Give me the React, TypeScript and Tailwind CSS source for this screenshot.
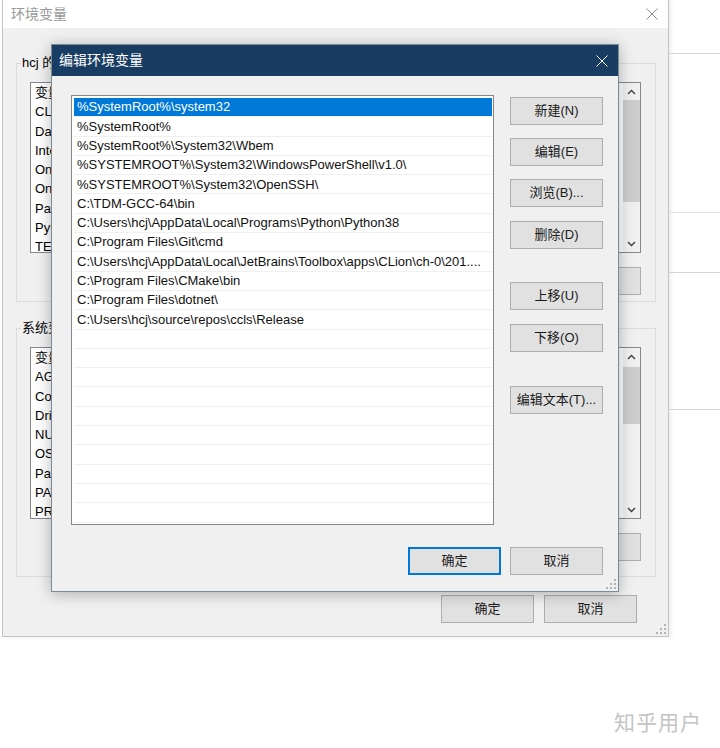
import React from "react";

const FONT = "font-['Liberation_Sans','Noto_Sans_CJK_SC',sans-serif]";

const PATHS = [
  "%SystemRoot%\\system32",
  "%SystemRoot%",
  "%SystemRoot%\\System32\\Wbem",
  "%SYSTEMROOT%\\System32\\WindowsPowerShell\\v1.0\\",
  "%SYSTEMROOT%\\System32\\OpenSSH\\",
  "C:\\TDM-GCC-64\\bin",
  "C:\\Users\\hcj\\AppData\\Local\\Programs\\Python\\Python38",
  "C:\\Program Files\\Git\\cmd",
  "C:\\Users\\hcj\\AppData\\Local\\JetBrains\\Toolbox\\apps\\CLion\\ch-0\\201....",
  "C:\\Program Files\\CMake\\bin",
  "C:\\Program Files\\dotnet\\",
  "C:\\Users\\hcj\\source\\repos\\ccls\\Release",
];

const USER_VARS = ["CLion", "DataGrip", "IntelliJ IDEA", "OneDrive", "OneDriveConsumer", "Path", "PyCharm", "TEMP"];
const SYS_VARS = ["AGENT_HOME", "ComSpec", "DriverData", "NUMBER_OF_PROCESSORS", "OS", "Path", "PATHEXT", "PROCESSOR_ARCHITECTURE"];

const CloseIcon = ({ color }: { color: string }) => (
  <svg width="12" height="12" viewBox="0 0 12 12">
    <path d="M0.5 0.5L11.5 11.5M11.5 0.5L0.5 11.5" stroke={color} strokeWidth="1" fill="none" />
  </svg>
);

const Chevron = ({ down }: { down?: boolean }) => (
  <svg width="9" height="6" viewBox="0 0 9 6">
    <path d={down ? "M1 1L4.5 4.5L8 1" : "M1 5L4.5 1.5L8 5"} stroke="#404040" strokeWidth="1.4" fill="none" />
  </svg>
);

const Grip = () => (
  <svg width="10" height="10" viewBox="0 0 10 10" fill="#b4b4b4">
    <rect x="8" y="0" width="2" height="2" />
    <rect x="4" y="4" width="2" height="2" />
    <rect x="8" y="4" width="2" height="2" />
    <rect x="0" y="8" width="2" height="2" />
    <rect x="4" y="8" width="2" height="2" />
    <rect x="8" y="8" width="2" height="2" />
  </svg>
);

const Button = ({ label, focused, className = "" }: { label: string; focused?: boolean; className?: string }) => (
  <div
    className={`flex h-[28px] w-[93px] shrink-0 items-center justify-center bg-[#e1e1e1] text-[13px] text-[#1a1a1a] ${
      focused ? "border border-[#0078d7] shadow-[inset_0_0_0_1px_#0078d7]" : "border border-[#adadad]"
    } ${className}`}
  >
    {label}
  </div>
);

// list view of the parent window, with its vertical scrollbar
const VarList = ({ items, height, thumb }: { items: string[]; height: string; thumb: string }) => (
  <div className={`flex ${height} w-[611px] border border-[#828790] bg-white`}>
    <div className="flex-1 overflow-hidden pl-[4px]">
      <div className="flex h-[19.3px] items-center text-[13px]">变量</div>
      {items.map((v, i) => (
        <div key={i} className="flex h-[19.3px] items-center whitespace-nowrap text-[13px]">
          {v}
        </div>
      ))}
    </div>
    <div className="flex w-[17px] flex-col bg-[#f0f0f0]">
      <div className="flex h-[17px] items-center justify-center">
        <Chevron />
      </div>
      <div className="flex-1">
        <div className={`bg-[#cdcdcd] ${thumb}`} />
      </div>
      <div className="flex h-[17px] items-center justify-center">
        <Chevron down />
      </div>
    </div>
  </div>
);

const EnvWindow = () => (
  <div className="ml-[2px] flex h-[637px] w-[667px] shrink-0 flex-col border-b border-l border-r border-[#c4c4c4] bg-[#f0f0f0] shadow-[2px_0_4px_rgba(0,0,0,0.08)]">
    <div className="flex h-[28px] items-center justify-between bg-white pl-[8px] pr-[10px]">
      <span className="text-[14px] text-[#9a9a9a]">环境变量</span>
      <CloseIcon color="#8a8a8a" />
    </div>

    <fieldset className="ml-[13px] mt-[26px] w-[640px] border border-[#dcdcdc]">
      <legend className="ml-[4px] px-[1px] text-[13px] leading-[18px]">hcj 的用户变量(U)</legend>
      <div className="pl-[13px] pr-[14px] pb-[6px]">
        <div className="mt-[10px]">
          <VarList items={USER_VARS} height="h-[171px]" thumb="h-[102px]" />
        </div>
        <div className="mt-[14px] flex justify-end gap-[8px]">
          <Button label="新建(W)..." />
          <Button label="编辑(I)..." />
          <Button label="删除(D)" />
        </div>
      </div>
    </fieldset>

    <fieldset className="ml-[13px] mt-[17px] w-[640px] border border-[#dcdcdc]">
      <legend className="ml-[4px] px-[1px] text-[13px] leading-[18px]">系统变量(S)</legend>
      <div className="pl-[13px] pr-[14px] pb-[15px]">
        <div className="mt-[10px]">
          <VarList items={SYS_VARS} height="h-[172px]" thumb="mt-[2px] h-[57px]" />
        </div>
        <div className="mt-[14px] flex justify-end gap-[8px]">
          <Button label="新建(W)..." />
          <Button label="编辑(I)..." />
          <Button label="删除(L)" />
        </div>
      </div>
    </fieldset>

    <div className="mt-[18px] flex justify-end gap-[10px] pr-[31px]">
      <Button label="确定" />
      <Button label="取消" />
    </div>
    <div className="mt-auto flex justify-end pb-[2px] pr-[2px]">
      <Grip />
    </div>
  </div>
);

const EditDialog = () => {
  const rows = [...PATHS, ...Array(10).fill("")];
  return (
    <div className="absolute left-[51px] top-[44px] flex h-[548px] w-[568px] flex-col border border-[#7b8a99] bg-[#f0f0f0] shadow-[0_2px_14px_rgba(0,0,0,0.28)]">
      <div className="flex h-[31px] shrink-0 items-center justify-between bg-[#183c62] pl-[7px] pr-[10px]">
        <span className="text-[14px] text-white">编辑环境变量</span>
        <CloseIcon color="#ffffff" />
      </div>

      <div className="flex flex-col pl-[19px] pr-[15px] pt-[19px]">
        <div className="flex gap-[16px]">
          <div className="h-[430px] w-[423px] overflow-hidden border border-[#828790] bg-white pl-[2px] pr-[1px] pt-[2px]">
            {rows.map((p, i) => (
              <div
                key={i}
                className={`flex h-[19.3px] items-center overflow-hidden whitespace-nowrap border-b border-[#f0f0f0] pl-[3px] text-[13px] ${
                  i === 0 ? "bg-[#0078d7] text-white" : "text-[#111]"
                }`}
              >
                {p}
              </div>
            ))}
          </div>
          <div className="flex flex-col pt-[2px]">
            <Button label="新建(N)" />
            <Button label="编辑(E)" className="mt-[13px]" />
            <Button label="浏览(B)..." className="mt-[13px]" />
            <Button label="删除(D)" className="mt-[14px]" />
            <Button label="上移(U)" className="mt-[33px]" />
            <Button label="下移(O)" className="mt-[14px]" />
            <Button label="编辑文本(T)..." className="mt-[34px]" />
          </div>
        </div>
        <div className="mt-[22px] flex justify-end gap-[9px]">
          <Button label="确定" focused />
          <Button label="取消" />
        </div>
      </div>
      <div className="mt-auto flex justify-end pb-[2px] pr-[2px]">
        <Grip />
      </div>
    </div>
  );
};

export default function App() {
  return (
    <div className={`relative flex h-[748px] w-[720px] overflow-hidden bg-white text-black ${FONT}`}>
      <EnvWindow />
      {/* edge of another window further back */}
      <div className="flex flex-1 flex-col">
        <div className="mt-[53px] h-px bg-[#d6d6d6]" />
        <div className="mt-[158px] h-px bg-[#e2e2e2]" />
        <div className="mt-[59px] h-px bg-[#d6d6d6]" />
        <div className="mt-[136px] h-px bg-[#d6d6d6]" />
      </div>
      <EditDialog />
      <span className="absolute right-[18px] top-[706px] font-['Noto_Sans_CJK_SC',sans-serif] text-[21px] tracking-[1px] text-[#c4c4c4]">
        知乎用户
      </span>
    </div>
  );
}
